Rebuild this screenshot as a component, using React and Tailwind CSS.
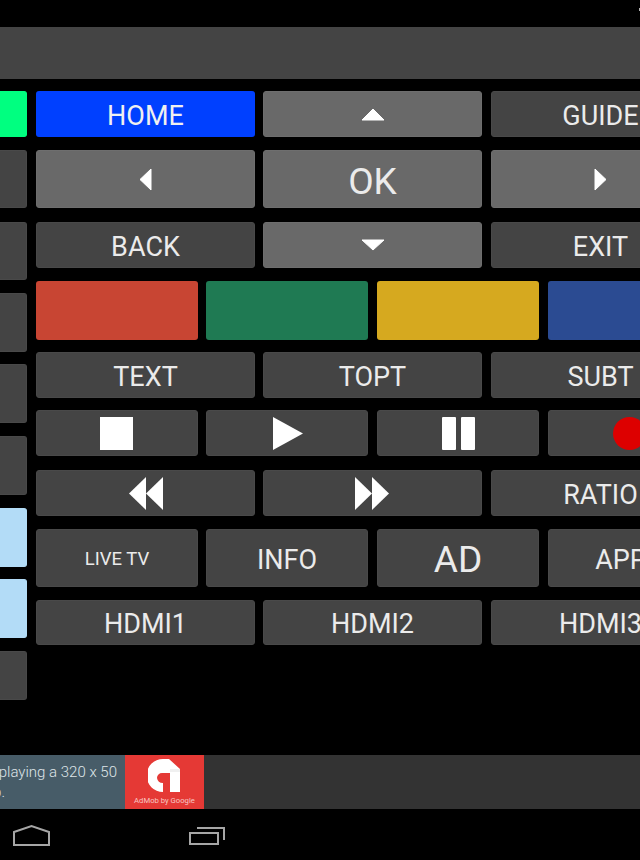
import React from 'react';

const Tri = ({ w, h, points }) => (
  <svg width={w} height={h} viewBox={`0 0 ${w} ${h}`} className="block" fill="white" stroke="white" strokeWidth="1" strokeLinejoin="round">
    <polygon points={points} />
  </svg>
);

// labels sit a little under the button's centre
const L = ({ children, className = 'pt-[4px]' }) => <span className={`block whitespace-nowrap ${className}`}>{children}</span>;

const Btn = ({ className = '', text = 'text-[27px]', children }) => (
  <div className={`flex shrink-0 items-center justify-center rounded-[3px] border border-[#494949] bg-[#444444] text-[#ebebeb] ${text} ${className}`}>
    {children}
  </div>
);

const LightBtn = ({ className = '', text = 'text-[27px]', children }) => (
  <div className={`flex shrink-0 items-center justify-center rounded-[3px] border border-[#6e6e6e] bg-[#696969] text-[#ebebeb] ${text} ${className}`}>
    {children}
  </div>
);

const ColorBlock = ({ className }) => <div className={`shrink-0 rounded-[3px] ${className}`} />;

const SideBtn = ({ className, color = 'bg-[#444444] border-[#494949]' }) => (
  <div className={`shrink-0 rounded-r-[3px] border-y border-r ${color} ${className}`} />
);

const Side = () => (
  <div className="flex w-[27px] shrink-0 flex-col">
    <SideBtn className="h-[46px] mb-[13px]" color="bg-[#00ff80] border-[#00ff80]" />
    <SideBtn className="h-[58px] mb-[14px]" />
    <SideBtn className="h-[58px] mb-[13px]" />
    <SideBtn className="h-[59px] mb-[12px]" />
    <SideBtn className="h-[59px] mb-[13px]" />
    <SideBtn className="h-[59px] mb-[13px]" />
    <SideBtn className="h-[59px] mb-[12px]" color="bg-[#b3dcf7] border-[#b3dcf7]" />
    <SideBtn className="h-[59px] mb-[13px]" color="bg-[#b3dcf7] border-[#b3dcf7]" />
    <SideBtn className="h-[49px]" />
  </div>
);

const Keys = () => (
  <div className="ml-[9px] flex w-[674px] shrink-0 flex-col">
    <div className="mb-[13px] flex h-[46px]">
      <div className="flex w-[219px] shrink-0 items-center justify-center rounded-[3px] bg-[#0040ff] text-[27px] text-[#f0f0f0]"><L>HOME</L></div>
      <LightBtn className="ml-[8px] w-[219px]"><Tri w={24} h={13} points="12,1 23,12 1,12" /></LightBtn>
      <Btn className="ml-[9px] w-[219px]"><L>GUIDE</L></Btn>
    </div>

    <div className="mb-[14px] flex h-[58px]">
      <LightBtn className="w-[219px]"><Tri w={13} h={23} points="12,1 12,22 1,11.5" /></LightBtn>
      <LightBtn className="ml-[8px] w-[219px]" text="text-[37px]"><L className="pt-[6px]">OK</L></LightBtn>
      <LightBtn className="ml-[9px] w-[219px]"><Tri w={13} h={23} points="1,1 1,22 12,11.5" /></LightBtn>
    </div>

    <div className="mb-[13px] flex h-[46px]">
      <Btn className="w-[219px]"><L>BACK</L></Btn>
      <LightBtn className="ml-[8px] w-[219px]"><Tri w={24} h={12} points="1,1 23,1 12,11" /></LightBtn>
      <Btn className="ml-[9px] w-[219px]"><L>EXIT</L></Btn>
    </div>

    <div className="mb-[12px] flex h-[59px]">
      <ColorBlock className="w-[162px] bg-[#c84533]" />
      <ColorBlock className="ml-[8px] w-[162px] bg-[#1f7a53]" />
      <ColorBlock className="ml-[9px] w-[162px] bg-[#d6a91f]" />
      <ColorBlock className="ml-[9px] w-[162px] bg-[#2b4b92]" />
    </div>

    <div className="mb-[12px] flex h-[46px]">
      <Btn className="w-[219px]"><L>TEXT</L></Btn>
      <Btn className="ml-[8px] w-[219px]"><L>TOPT</L></Btn>
      <Btn className="ml-[9px] w-[219px]"><L>SUBT</L></Btn>
    </div>

    <div className="mb-[14px] flex h-[46px]">
      <Btn className="w-[162px]"><div className="mr-[1px] h-[33px] w-[33px] bg-white" /></Btn>
      <Btn className="ml-[8px] w-[162px]">
        <svg width="30" height="33" viewBox="0 0 30 33" className="ml-[1px] block" fill="white"><polygon points="0,0 30,16.5 0,33" /></svg>
      </Btn>
      <Btn className="ml-[9px] w-[162px]">
        <div className="flex gap-[5px]">
          <div className="h-[33px] w-[14px] rounded-[1px] bg-white" />
          <div className="h-[33px] w-[14px] rounded-[1px] bg-white" />
        </div>
      </Btn>
      <Btn className="ml-[9px] w-[162px]"><div className="h-[33px] w-[33px] rounded-full bg-[#dd0000]" /></Btn>
    </div>

    <div className="mb-[13px] flex h-[46px]">
      <Btn className="w-[219px]">
        <svg width="34" height="33" viewBox="0 0 34 33" className="ml-[1px] block" fill="white">
          <polygon points="17,0 17,33 0,16.5" />
          <polygon points="34,0 34,33 17,16.5" />
        </svg>
      </Btn>
      <Btn className="ml-[8px] w-[219px]">
        <svg width="34" height="33" viewBox="0 0 34 33" className="mr-[2px] block" fill="white">
          <polygon points="0,0 0,33 17,16.5" />
          <polygon points="17,0 17,33 34,16.5" />
        </svg>
      </Btn>
      <Btn className="ml-[9px] w-[219px]"><L>RATIO</L></Btn>
    </div>

    <div className="mb-[13px] flex h-[58px]">
      <Btn className="w-[162px]" text="text-[18.5px]"><L>LIVE TV</L></Btn>
      <Btn className="ml-[8px] w-[162px]"><L>INFO</L></Btn>
      <Btn className="ml-[9px] w-[162px]" text="text-[37px]"><L>AD</L></Btn>
      <Btn className="ml-[9px] w-[162px]"><L>APPS</L></Btn>
    </div>

    <div className="flex h-[45px]">
      <Btn className="w-[219px]"><L>HDMI1</L></Btn>
      <Btn className="ml-[8px] w-[219px]"><L>HDMI2</L></Btn>
      <Btn className="ml-[9px] w-[219px]"><L>HDMI3</L></Btn>
    </div>
  </div>
);

const AdBanner = () => (
  <div className="flex h-[54px] shrink-0 bg-[#333333]">
    <div className="flex w-[125px] shrink-0 flex-col overflow-hidden bg-[#475c68] pt-[7px] text-[15px] font-light leading-[20px] text-[#dfe5e8]">
      <div className="flex w-[117px] shrink-0 justify-end whitespace-nowrap">You are displaying a 320 x 50</div>
      <div className="flex w-[5px] shrink-0 justify-end whitespace-nowrap">test ad in your app.</div>
    </div>
    <div className="flex w-[79px] shrink-0 flex-col items-center bg-[#e53935] pt-[4px]">
      <svg width="32" height="33" viewBox="0 0 32 33" className="mr-[1px] block">
        <path fill="white" d="M15 0 H21 L32 10 V33 H22 V14 H14 A5 5 0 0 0 9 19 A6 6 0 0 0 15 24 V33 A16.5 16.5 0 0 1 15 0 Z" />
        <path fill="#f0f0f0" d="M22 10 H32 V13 H22 Z" />
      </svg>
      <div className="mt-[2px] whitespace-nowrap text-[7.7px] leading-[13px] text-[#f8c6c2]">AdMob by Google</div>
    </div>
  </div>
);

const NavBar = () => (
  <div className="flex flex-1 items-start pl-[12px] pt-[15px]">
    <svg width="40" height="23" viewBox="0 0 40 23" className="block" fill="none" stroke="#a6a6a6" strokeWidth="2">
      <path d="M2 8 L19.500 2 L37 8 V21 H2 Z" />
    </svg>
    <svg width="38" height="20" viewBox="0 0 38 20" className="ml-[136px] mt-[2px] block" fill="none" stroke="#a6a6a6" strokeWidth="2">
      <rect x="2" y="7" width="28" height="11" />
      <path d="M9 2 H36 V14" />
    </svg>
  </div>
);

export default function App() {
  return (
    <div className="flex h-[860px] w-[640px] flex-col overflow-hidden bg-black font-['Roboto',sans-serif]">
      {/* status bar, clock is cut off at the edge */}
      <div className="flex h-[27px] shrink-0 justify-end pt-[8px]">
        <div className="h-[3px] w-px bg-white/70" />
      </div>
      <div className="h-[52px] shrink-0 bg-[#444444]" />
      <div className="flex h-[676px] shrink-0 pt-[12px]">
        <Side />
        <Keys />
      </div>
      <AdBanner />
      <NavBar />
    </div>
  );
}
